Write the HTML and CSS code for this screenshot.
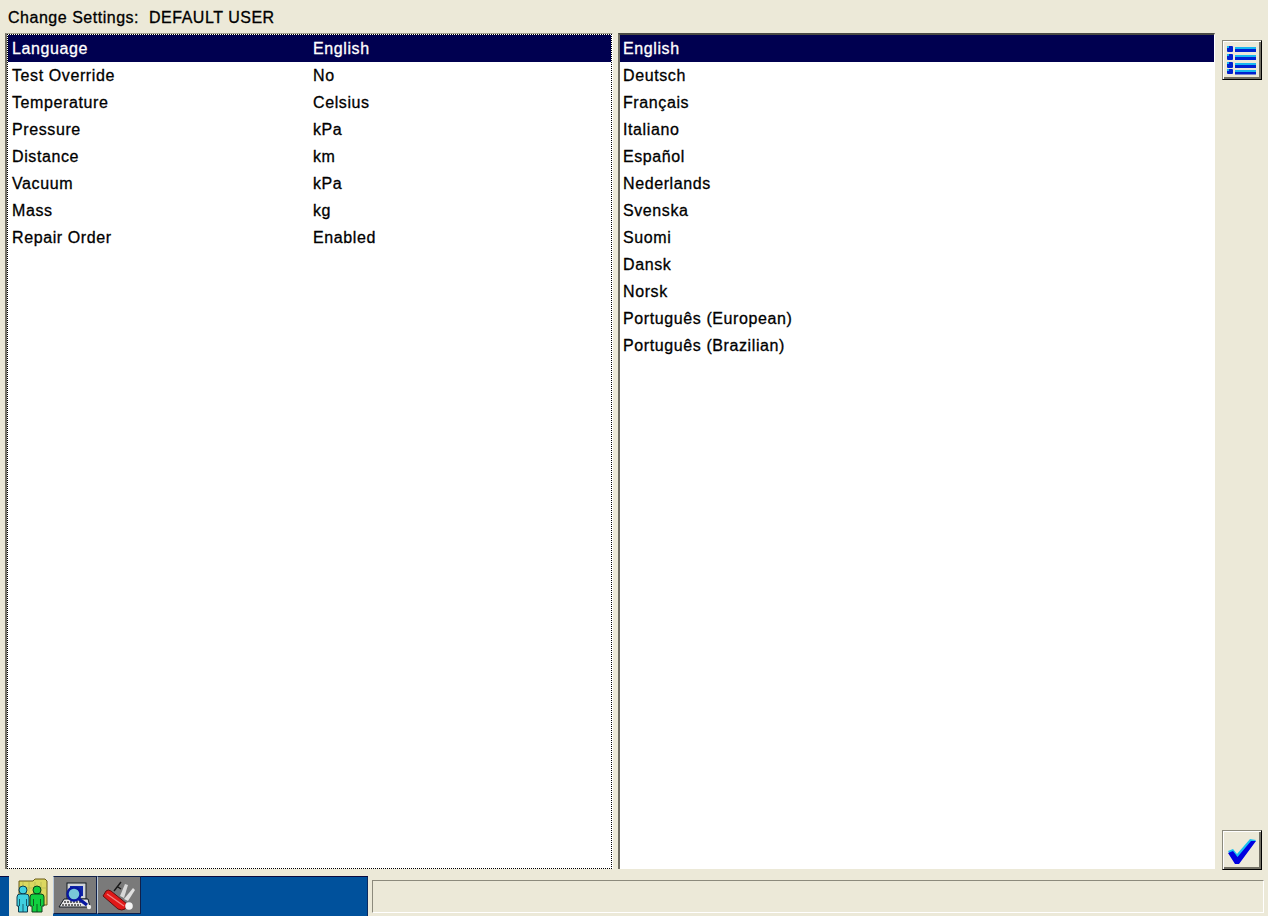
FILE: index.html
```html
<!DOCTYPE html>
<html lang="en">
<head>
<meta charset="utf-8">
<title>Change Settings</title>
<link rel="stylesheet" href="styles.css">
</head>
<body>
<div class="app">
  <header class="title">Change Settings:&nbsp; DEFAULT USER</header>
  <main class="main">
    <section class="panel panel-left">
      <div class="focus">
        <div class="row selected"><span class="key">Language</span><span>English</span></div>
        <div class="row"><span class="key">Test Override</span><span>No</span></div>
        <div class="row"><span class="key">Temperature</span><span>Celsius</span></div>
        <div class="row"><span class="key">Pressure</span><span>kPa</span></div>
        <div class="row"><span class="key">Distance</span><span>km</span></div>
        <div class="row"><span class="key">Vacuum</span><span>kPa</span></div>
        <div class="row"><span class="key">Mass</span><span>kg</span></div>
        <div class="row"><span class="key">Repair Order</span><span>Enabled</span></div>
      </div>
    </section>
    <section class="panel panel-right">
      <div class="row selected">English</div>
      <div class="row">Deutsch</div>
      <div class="row">Français</div>
      <div class="row">Italiano</div>
      <div class="row">Español</div>
      <div class="row">Nederlands</div>
      <div class="row">Svenska</div>
      <div class="row">Suomi</div>
      <div class="row">Dansk</div>
      <div class="row">Norsk</div>
      <div class="row">Português (European)</div>
      <div class="row">Português (Brazilian)</div>
    </section>
    <aside class="tools">
      <button class="tool" aria-label="List">
        <svg width="38" height="38" viewBox="0 0 38 38">
          <g fill="#0020d0">
            <rect x="4" y="5" width="6" height="6" rx="1"/>
            <rect x="4" y="13" width="6" height="6" rx="1"/>
            <rect x="4" y="21" width="6" height="6" rx="1"/>
            <rect x="4" y="28" width="6" height="5" rx="1"/>
            <rect x="12" y="8" width="21" height="3"/>
            <rect x="12" y="16" width="21" height="3"/>
            <rect x="12" y="24" width="21" height="3"/>
            <rect x="12" y="31" width="21" height="2.5"/>
          </g>
          <g fill="#18b8f0">
            <rect x="12" y="6" width="21" height="2"/>
            <rect x="12" y="14" width="21" height="2"/>
            <rect x="12" y="22" width="21" height="2"/>
            <rect x="12" y="29" width="21" height="2"/>
            <rect x="4" y="5" width="2" height="2"/>
            <rect x="4" y="13" width="2" height="2"/>
            <rect x="4" y="21" width="2" height="2"/>
            <rect x="4" y="28" width="2" height="2"/>
          </g>
        </svg>
      </button>
      <button class="tool" aria-label="Accept">
        <svg width="38" height="38" viewBox="0 0 38 38">
          <path d="M5 20 L10 18 L14 23 L27 8 L33 9 L16 32 L12 32 Z" fill="#18c0f0"/>
          <path d="M5 22 L10 20 L14.5 26 L28 10 L33 10 L16 33 L12 33 Z" fill="#0000e0"/>
        </svg>
      </button>
    </aside>
  </main>
  <footer class="bottom">
    <nav class="tabs">
      <button class="tab active" aria-label="Users">
        <svg width="44" height="40" viewBox="0 0 44 40">
          <path d="M10 5 H24 L26 3 H36 L38 5 V29 H10 Z" fill="#dcd860" stroke="#6a5a18"/>
          <path d="M14 6 V29 M20 6 V29 M26 6 V29 M32 6 V29 M10 12 H38 M10 20 H38" stroke="#a8b050" stroke-width="1" opacity=".6"/>
          <circle cx="14" cy="14" r="4" fill="#40d0e0" stroke="#0c3c50"/>
          <path d="M8 30 V21 Q8 18 11 18 H17 Q20 18 20 21 V30 H18.5 V36 H9.5 V30 Z" fill="#40d0e0" stroke="#0c3c50"/>
          <path d="M14 28 V36 M10.5 23 V30 M17.5 23 V30" stroke="#0c3c50" stroke-width=".8"/>
          <circle cx="28" cy="14" r="4" fill="#10d040" stroke="#0c4018"/>
          <path d="M21 30 V21 Q21 18 24 18 H32 Q35 18 35 21 V30 H33 V36 H23 V30 Z" fill="#10d040" stroke="#0c4018"/>
          <path d="M28 28 V36 M24.5 23 V30 M31.5 23 V30" stroke="#0c4018" stroke-width=".8"/>
        </svg>
      </button>
      <button class="tab" aria-label="Diagnostics">
        <svg width="42" height="36" viewBox="1 1 42 36">
          <rect x="14" y="7" width="19" height="16" fill="#d0d4d8" stroke="#101820"/>
          <rect x="17" y="10" width="13" height="10" fill="#1028a8"/>
          <path d="M6 31 L11 23 H35 L37 31 Z" fill="#e8e8e8" stroke="#101820"/>
          <path d="M11 26 H30 M9 29 H28" stroke="#404040" stroke-width="1.5" stroke-dasharray="2 1"/>
          <circle cx="21" cy="18" r="6.5" fill="#78c8d8" stroke="#0818a0" stroke-width="2.4"/>
          <path d="M26 23 L34 29" stroke="#0818a0" stroke-width="3.4"/>
          <circle cx="36" cy="31" r="2.2" fill="#f0f0f0"/>
        </svg>
      </button>
      <button class="tab" aria-label="Tools">
        <svg width="42" height="36" viewBox="1 1 42 36">
          <path d="M17 15 L24 6 M21 11 L24 13" stroke="#181818" stroke-width="1.4" fill="none"/>
          <path d="M23 20 L28 8 L31 9 L27 22 Z" fill="#d8d8d8"/>
          <path d="M27 23 L36 12 L38 14 L31 25 Z" fill="#e0e0e0"/>
          <path d="M6 20 L9 15 Q11 13 14 15 L30 28 L28 33 Q25 35 21 33 Z" fill="#e01818" stroke="#601010"/>
          <path d="M10 18 L27 30" stroke="#f08080" stroke-width="1.4"/>
          <circle cx="32" cy="30" r="3.8" fill="#f4f4f4"/>
        </svg>
      </button>
    </nav>
    <div class="status"></div>
  </footer>
</div>
</body>
</html>
```

FILE: styles.css
```css
* { box-sizing: border-box; }
html, body { margin: 0; padding: 0; }
body {
  width: 1268px;
  height: 916px;
  overflow: hidden;
  background: #ece9d8;
  color: #000;
  font-family: "Liberation Sans", Arial, sans-serif;
  font-size: 16px;
  -webkit-text-stroke: 0.3px currentColor;
}
.app { display: flex; flex-direction: column; height: 916px; }
.title { height: 33px; padding: 9px 0 0 8px; line-height: 18px; letter-spacing: 0.52px; }
.main { display: flex; height: 837px; padding-left: 5px; }
.panel {
  height: 836px;
  background: #fff;
  border-left: 2px solid #716f64;
  border-right: 1px solid #fff;
}
.panel-left { width: 608px; border-top: 1px solid #a09e90; }
.panel-right { width: 597px; margin-left: 5px; border-top: 2px solid #4a4a44; }
.focus { height: 100%; border: 1px dotted #000; }
.row {
  display: flex;
  height: 27px;
  align-items: center;
  padding-left: 4px;
  letter-spacing: 0.6px;
}
.panel-right .row { padding-left: 3px; }
.selected { background: #000050; color: #fff; }
.key { width: 301px; }
.tools {
  width: 40px;
  margin-left: 7px;
  padding: 7px 0 0;
  height: 837px;
  display: flex;
  flex-direction: column;
  justify-content: space-between;
}
.tool {
  width: 40px;
  height: 40px;
  padding: 0;
  display: flex;
  align-items: center;
  justify-content: center;
  background: #ece9d8;
  border: 1px solid #000;
  border-top-color: #8c8a7c;
  border-left-color: #8c8a7c;
  box-shadow: inset 1px 1px 0 #fff, inset -2px -2px 0 #716f64;
}
.bottom { display: flex; height: 40px; margin-top: 6px; }
.tabs {
  width: 368px;
  background: #00519c;
  padding-left: 9px;
  display: flex;
  align-items: flex-start;
  box-shadow: inset 0 1px 0 #0a0a40, inset -1px 0 0 #0a2a60;
}
.tab {
  width: 44px;
  height: 38px;
  padding: 0;
  display: flex;
  align-items: center;
  justify-content: center;
  background: #7a7a7a;
  border: 1px solid #10204a;
  border-left-color: #b8c8d8;
}
.tab.active {
  height: 40px;
  background: #ece9d8;
  border: 0;
}
.status {
  width: 892px;
  height: 33px;
  margin: 4px 0 0 4px;
  border-top: 1px solid #8c8a7c;
  border-left: 1px solid #8c8a7c;
  border-right: 1px solid #fff;
  border-bottom: 1px solid #fff;
}
```
